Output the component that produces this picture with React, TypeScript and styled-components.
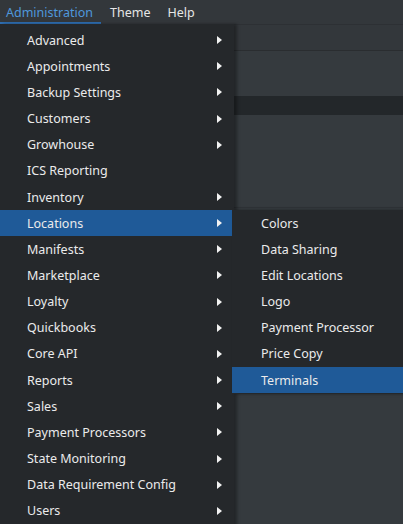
import React from 'react';
import styled, { createGlobalStyle } from 'styled-components';

const GlobalStyle = createGlobalStyle`
  html, body {
    margin: 0;
    padding: 0;
    width: 403px;
    height: 524px;
    overflow: hidden;
    background: #353a3e;
    font-family: 'Noto Sans', 'Open Sans', sans-serif;
  }
`;

const Page = styled.div`
  position: relative;
  width: 403px;
  height: 524px;
  display: flex;
  flex-direction: column;
  background: #353a3e;
`;

const MenuBar = styled.div`
  height: 24px;
  display: flex;
  align-items: stretch;
  background: #33373b;
  flex-shrink: 0;
`;

const BarItem = styled.div<{ $open?: boolean }>`
  padding: 0 8px 0 6px;
  margin-right: 3px;
  display: flex;
  align-items: center;
  font-size: 12.5px;
  color: ${({ $open }) => ($open ? '#4f97dc' : '#e6e6e6')};
  box-shadow: ${({ $open }) => ($open ? 'inset 0 -2px 0 #2e6db0' : 'none')};
`;

const Toolbar = styled.div`
  height: 25px;
  background: #33373b;
  border-top: 1px solid #2d3034;
  border-bottom: 1px solid #2a2d30;
  flex-shrink: 0;
`;

const Panel = styled.div`
  height: 45px;
  background: #353a3e;
  flex-shrink: 0;
`;

const DarkBand = styled.div`
  height: 19px;
  background: #23272a;
  flex-shrink: 0;
`;

const Content = styled.div`
  flex: 1;
  background: #353a3e;
  border-top: 92px solid #353a3e;
  box-shadow: inset 0 92px 0 -91px #2e3236;
`;

const Menu = styled.ul<{ $width: number }>`
  position: absolute;
  margin: 0;
  padding: 3px 0 0;
  list-style: none;
  width: ${({ $width }) => $width}px;
  background: #25282b;
  box-shadow: 3px 0 3px rgba(0, 0, 0, 0.35);
  z-index: 10;
`;

const MainMenu = styled(Menu)`
  top: 24px;
  left: 0;
  height: 500px;
`;

const SubMenu = styled(Menu)`
  top: 0;
  left: 232px;
  padding: 0 0 1px;
  z-index: 20;
`;

const Item = styled.li<{ $active?: boolean; $indent: number }>`
  position: relative;
  height: 26.17px;
  display: flex;
  align-items: center;
  padding-left: ${({ $indent }) => $indent}px;
  font-size: 12.5px;
  color: #ebebeb;
  background: ${({ $active }) => ($active ? '#1f5a98' : 'transparent')};
  white-space: nowrap;
`;

const Arrow = styled.span`
  position: absolute;
  right: 12px;
  top: 50%;
  margin-top: -4px;
  width: 0;
  height: 0;
  border-top: 4px solid transparent;
  border-bottom: 4px solid transparent;
  border-left: 5px solid #f2f2f2;
`;

const mainItems = [
  'Advanced',
  'Appointments',
  'Backup Settings',
  'Customers',
  'Growhouse',
  'ICS Reporting',
  'Inventory',
  'Locations',
  'Manifests',
  'Marketplace',
  'Loyalty',
  'Quickbooks',
  'Core API',
  'Reports',
  'Sales',
  'Payment Processors',
  'State Monitoring',
  'Data Requirement Config',
  'Users',
];

const noArrow = ['ICS Reporting'];

const locationItems = [
  'Colors',
  'Data Sharing',
  'Edit Locations',
  'Logo',
  'Payment Processor',
  'Price Copy',
  'Terminals',
];

export default function App() {
  return (
    <Page>
      <GlobalStyle />
      <MenuBar>
        <BarItem $open>Administration</BarItem>
        <BarItem>Theme</BarItem>
        <BarItem>Help</BarItem>
      </MenuBar>
      <Toolbar />
      <Panel />
      <DarkBand />
      <Content />

      <MainMenu $width={234}>
        {mainItems.map((name) => (
          <Item key={name} $indent={27} $active={name === 'Locations'}>
            {name}
            {!noArrow.includes(name) && <Arrow />}
            {name === 'Locations' && (
              <SubMenu $width={180}>
                {locationItems.map((sub) => (
                  <Item key={sub} $indent={29} $active={sub === 'Terminals'}>
                    {sub}
                  </Item>
                ))}
              </SubMenu>
            )}
          </Item>
        ))}
      </MainMenu>
    </Page>
  );
}
